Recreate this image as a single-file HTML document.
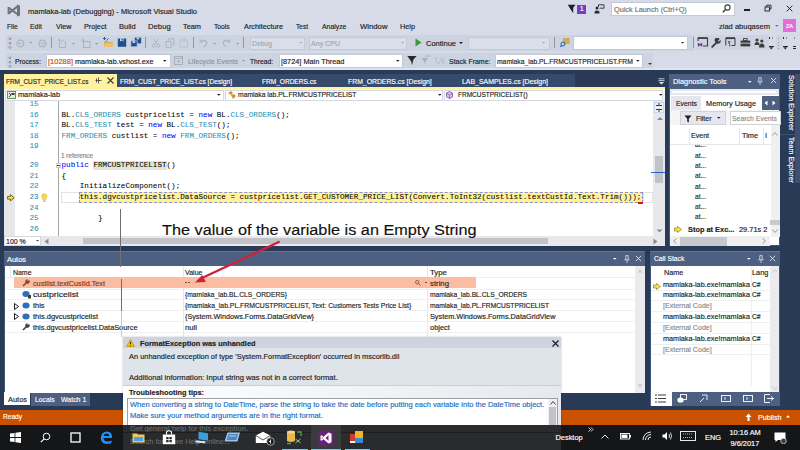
<!DOCTYPE html>
<html><head><meta charset="utf-8">
<style>
*{margin:0;padding:0;box-sizing:border-box}
html,body{width:800px;height:450px;overflow:hidden;background:#d6dbe7;font-family:"Liberation Sans",sans-serif;font-size:7px;color:#1e1e1e}
.a{position:absolute;display:block}
.t{position:absolute;white-space:nowrap;line-height:1;-webkit-text-stroke:0.16px currentColor}
</style></head><body>
<div class="a" style="left:0px;top:0px;width:800px;height:34px;background:#d6dbe7;"></div>
<svg class="a" style="left:6px;top:3px;" width="15" height="15" viewBox="0 0 15 15"><path d="M11 1.5 L14 2.6 V12.4 L11 13.5 Z" fill="#6e7480"/><path d="M2.8 4.8 L11.5 11.2 M2.8 10.4 L11.5 3.4" stroke="#6e7480" stroke-width="2"/><rect x="1.6" y="4" width="2" height="7.2" fill="#6e7480"/></svg>
<div class="t" style="left:28px;top:7.65px;font-size:7.5px;color:#1e1e1e;transform-origin:0 0;transform:scaleX(0.9994);">mamlaka-lab (Debugging) - Microsoft Visual Studio</div>
<svg class="a" style="left:567px;top:4px;" width="10" height="10" viewBox="0 0 10 10"><path d="M0.8 0.8 H8.5 L6.2 3.8 V9.2 L3.6 5.2 Z" fill="#1e1e1e"/></svg>
<div class="a" style="left:577px;top:5px;width:9px;height:8.5px;background:#7a3cc2;"></div>
<div class="t" style="left:579.5px;top:5.94px;font-size:6.8px;color:#ffffff;transform-origin:0 0;transform:scaleX(0.9524);">1</div>
<svg class="a" style="left:594px;top:4px;" width="11" height="10" viewBox="0 0 11 10"><circle cx="3" cy="4" r="1.5" fill="#2a2a2a"/><path d="M0.6 9.5 V7.6 Q3 5.6 5.4 7.6 V9.5 Z" fill="#2a2a2a"/><path d="M4.5 3 V0.8 H10 V4.2 H6.5 L5.5 5" fill="none" stroke="#2a2a2a" stroke-width="0.9"/></svg>
<div class="a" style="left:610.5px;top:2px;width:124.5px;height:13.5px;background:#ffffff;border:1px solid #c3c9d5;"></div>
<div class="t" style="left:614px;top:5.82px;font-size:7.3px;color:#717171;">Quick Launch (Ctrl+Q)</div>
<svg class="a" style="left:722px;top:4px;" width="9" height="9" viewBox="0 0 9 9"><circle cx="5.5" cy="3.5" r="2.6" fill="none" stroke="#3c3c3c" stroke-width="1.1"/><path d="M3.6 5.4 L0.8 8.2" stroke="#3c3c3c" stroke-width="1.4"/></svg>
<div class="a" style="left:744px;top:9px;width:6px;height:1.6px;background:#1e1e1e;"></div>
<svg class="a" style="left:764px;top:4px;" width="8" height="8" viewBox="0 0 8 8"><rect x="1" y="3" width="4.5" height="4" fill="none" stroke="#1e1e1e" stroke-width="0.9"/><path d="M2.6 3 V1.2 H7 V5 H5.5" fill="none" stroke="#1e1e1e" stroke-width="0.9"/></svg>
<svg class="a" style="left:786px;top:5px;" width="7" height="7" viewBox="0 0 7 7"><path d="M0.7 0.7 L6.3 6.3 M6.3 0.7 L0.7 6.3" stroke="#1e1e1e" stroke-width="0.95"/></svg>
<div class="t" style="left:6.8px;top:22.74px;font-size:7.4px;color:#1e1e1e;transform-origin:0 0;transform:scaleX(0.9069);">File</div>
<div class="t" style="left:30.2px;top:22.74px;font-size:7.4px;color:#1e1e1e;transform-origin:0 0;transform:scaleX(0.9266);">Edit</div>
<div class="t" style="left:55.6px;top:22.74px;font-size:7.4px;color:#1e1e1e;transform-origin:0 0;transform:scaleX(0.9694);">View</div>
<div class="t" style="left:83.5px;top:22.74px;font-size:7.4px;color:#1e1e1e;transform-origin:0 0;transform:scaleX(0.9782);">Project</div>
<div class="t" style="left:119.4px;top:22.74px;font-size:7.4px;color:#1e1e1e;transform-origin:0 0;transform:scaleX(1.0101);">Build</div>
<div class="t" style="left:148.3px;top:22.74px;font-size:7.4px;color:#1e1e1e;transform-origin:0 0;transform:scaleX(1.0423);">Debug</div>
<div class="t" style="left:183px;top:22.74px;font-size:7.4px;color:#1e1e1e;transform-origin:0 0;transform:scaleX(0.9961);">Team</div>
<div class="t" style="left:214.3px;top:22.74px;font-size:7.4px;color:#1e1e1e;transform-origin:0 0;transform:scaleX(0.9100);">Tools</div>
<div class="t" style="left:244px;top:22.74px;font-size:7.4px;color:#1e1e1e;transform-origin:0 0;transform:scaleX(0.9890);">Architecture</div>
<div class="t" style="left:296px;top:22.74px;font-size:7.4px;color:#1e1e1e;transform-origin:0 0;transform:scaleX(0.8854);">Test</div>
<div class="t" style="left:321.6px;top:22.74px;font-size:7.4px;color:#1e1e1e;transform-origin:0 0;transform:scaleX(0.9280);">Analyze</div>
<div class="t" style="left:359.5px;top:22.74px;font-size:7.4px;color:#1e1e1e;transform-origin:0 0;transform:scaleX(1.0462);">Window</div>
<div class="t" style="left:400px;top:22.74px;font-size:7.4px;color:#1e1e1e;transform-origin:0 0;transform:scaleX(0.9868);">Help</div>
<div class="t" style="left:719px;top:22.74px;font-size:7.4px;color:#1e1e1e;transform-origin:0 0;transform:scaleX(1.0175);">ziad abuqasem</div>
<svg class="a" style="left:775.2px;top:24.5px;" width="3.6" height="2.3" viewBox="0 0 3.6 2.3"><path d="M0 0 L3.6 0 L1.8 1.8 Z" fill="#717171"/></svg>
<div class="a" style="left:783px;top:19px;width:13px;height:13px;background:#e070d8;"></div>
<div class="t" style="left:786px;top:23.84px;font-size:5.5px;color:#ffffff;transform-origin:0 0;transform:scaleX(0.9960);">ZA</div>
<div class="a" style="left:6.3px;top:35px;width:688.7px;height:15.5px;background:#ccd3e1;"></div>
<div class="a" style="left:697px;top:35px;width:72px;height:15px;background:#ccd3e1;"></div>
<svg class="a" style="left:7.5px;top:37px;" width="4" height="13" viewBox="0 0 4 13"><path d="M2 0.6 L3.2 1.8 L2 3 L0.8 1.8 Z M2 5 L3.2 6.2 L2 7.4 L0.8 6.2 Z M2 9.2 L3.2 10.4 L2 11.6 L0.8 10.4 Z" fill="none" stroke="#75809a" stroke-width="0.75"/></svg>
<svg class="a" style="left:16px;top:38.5px;" width="9" height="9" viewBox="0 0 9 9"><circle cx="4.3" cy="4.5" r="3.3" fill="none" stroke="#b2b7c0" stroke-width="1.4"/><path d="M6 4.5 H2.8 M4.2 3 L2.7 4.5 L4.2 6" fill="none" stroke="#b2b7c0" stroke-width="0.9"/></svg>
<svg class="a" style="left:29.4px;top:42px;" width="3.2" height="2.1" viewBox="0 0 3.2 2.1"><path d="M0 0 L3.2 0 L1.6 1.6 Z" fill="#8f949e"/></svg>
<svg class="a" style="left:38px;top:38.5px;" width="9" height="9" viewBox="0 0 9 9"><circle cx="4.4" cy="4.5" r="3.3" fill="none" stroke="#b2b7c0" stroke-width="1.4"/><path d="M2.7 4.5 H5.9 M4.5 3 L6 4.5 L4.5 6" fill="none" stroke="#b2b7c0" stroke-width="0.9"/></svg>
<div class="a" style="left:51px;top:37px;width:1px;height:11px;background:#8f96a4;"></div>
<svg class="a" style="left:57px;top:38px;" width="10" height="10" viewBox="0 0 10 10"><path d="M2.5 4.5 V9.5 H8.5 V4.5 L5.5 2 Z" fill="none" stroke="#aab0ba" stroke-width="0.9"/><path d="M1 1 L3 3 M3 1 L1 3" stroke="#aab0ba" stroke-width="0.8"/></svg>
<svg class="a" style="left:72.4px;top:42.5px;" width="3.2" height="2.1" viewBox="0 0 3.2 2.1"><path d="M0 0 L3.2 0 L1.6 1.6 Z" fill="#8f949e"/></svg>
<svg class="a" style="left:81px;top:38px;" width="10" height="10" viewBox="0 0 10 10"><rect x="2.5" y="3.5" width="6.5" height="6" fill="none" stroke="#aab0ba" stroke-width="0.9"/><path d="M2 0.5 V4 M0.3 2.2 H3.8" stroke="#aab0ba" stroke-width="0.8"/></svg>
<svg class="a" style="left:95.4px;top:42.5px;" width="3.2" height="2.1" viewBox="0 0 3.2 2.1"><path d="M0 0 L3.2 0 L1.6 1.6 Z" fill="#8f949e"/></svg>
<svg class="a" style="left:102px;top:37px;" width="12" height="11" viewBox="0 0 12 11"><path d="M2 4 H5.5 L6.5 5 H11 V10 H2 Z" fill="#dcaa55"/><path d="M2.5 6.2 H11 V10 H2 Z" fill="#e8c27a"/><path d="M1 1.5 L4 1.5 M2.5 0 V3 M4.5 3.5 L6.5 1.5" stroke="#1f5fa8" stroke-width="1"/></svg>
<svg class="a" style="left:117px;top:37px;" width="10" height="11" viewBox="0 0 10 11"><path d="M0.8 1.5 H9.2 V9.8 H0.8 Z" fill="#1f4f8f"/><rect x="3" y="1.5" width="3.6" height="2.6" fill="#ccd3e1"/><rect x="4.6" y="2" width="1.2" height="1.6" fill="#1f4f8f"/></svg>
<svg class="a" style="left:130px;top:37px;" width="12" height="11" viewBox="0 0 12 11"><path d="M4.8 0.6 H11.2 V6.4 H4.8 Z" fill="#1f4f8f"/><rect x="6.6" y="0.6" width="2.6" height="1.8" fill="#ccd3e1"/><path d="M0.8 3.8 H7.2 V9.8 H0.8 Z" fill="#1f4f8f" stroke="#ccd3e1" stroke-width="0.7"/><rect x="2.6" y="4.2" width="2.6" height="1.8" fill="#ccd3e1"/></svg>
<div class="a" style="left:145px;top:37px;width:1px;height:11px;background:#8f96a4;"></div>
<svg class="a" style="left:151px;top:38px;" width="10" height="10" viewBox="0 0 10 10"><circle cx="2.6" cy="7.6" r="1.5" fill="none" stroke="#adb2bc" stroke-width="0.9"/><circle cx="7.4" cy="7.6" r="1.5" fill="none" stroke="#adb2bc" stroke-width="0.9"/><path d="M2.4 0.8 L6.4 6.4 M7.6 0.8 L3.6 6.4" stroke="#adb2bc" stroke-width="0.9"/></svg>
<svg class="a" style="left:165px;top:38px;" width="10" height="10" viewBox="0 0 10 10"><rect x="1" y="3.5" width="5" height="5.8" fill="none" stroke="#adb2bc" stroke-width="0.9"/><path d="M3.5 2.5 V0.8 H8.8 V6.8 H7" fill="none" stroke="#adb2bc" stroke-width="0.9"/></svg>
<svg class="a" style="left:179px;top:38px;" width="10" height="10" viewBox="0 0 10 10"><rect x="1" y="3" width="7.5" height="6.3" fill="none" stroke="#bcc1ca" stroke-width="0.9"/><path d="M3 3 V1.2 H6.5 V3" fill="none" stroke="#bcc1ca" stroke-width="0.9"/></svg>
<div class="a" style="left:193px;top:37px;width:1px;height:11px;background:#8f96a4;"></div>
<svg class="a" style="left:199px;top:38px;" width="10" height="10" viewBox="0 0 10 10"><path d="M1.2 1.2 V4 H4" fill="none" stroke="#adb2bc" stroke-width="1"/><path d="M1.5 3.8 Q4 1.5 6.5 2.8 Q8.8 4.5 7 7 L5 9.2" fill="none" stroke="#adb2bc" stroke-width="1.1"/></svg>
<svg class="a" style="left:213.4px;top:42.5px;" width="3.2" height="2.1" viewBox="0 0 3.2 2.1"><path d="M0 0 L3.2 0 L1.6 1.6 Z" fill="#8f949e"/></svg>
<svg class="a" style="left:221px;top:38px;" width="10" height="10" viewBox="0 0 10 10"><path d="M8.8 1.2 V4 H6" fill="none" stroke="#adb2bc" stroke-width="1"/><path d="M8.5 3.8 Q6 1.5 3.5 2.8 Q1.2 4.5 3 7 L5 9.2" fill="none" stroke="#adb2bc" stroke-width="1.1"/></svg>
<svg class="a" style="left:235.9px;top:42.5px;" width="3.2" height="2.1" viewBox="0 0 3.2 2.1"><path d="M0 0 L3.2 0 L1.6 1.6 Z" fill="#8f949e"/></svg>
<div class="a" style="left:243px;top:37px;width:1px;height:11px;background:#8f96a4;"></div>
<div class="a" style="left:249.5px;top:36.5px;width:55px;height:13px;background:#d9dee8;border:1px solid #c3c9d5;"></div>
<div class="t" style="left:252px;top:39.91px;font-size:7.2px;color:#a2a7b0;transform-origin:0 0;transform:scaleX(0.9443);">Debug</div>
<svg class="a" style="left:298.9px;top:42px;" width="3.2" height="2.1" viewBox="0 0 3.2 2.1"><path d="M0 0 L3.2 0 L1.6 1.6 Z" fill="#a2a7b0"/></svg>
<div class="a" style="left:309px;top:36.5px;width:98px;height:13px;background:#d9dee8;border:1px solid #c3c9d5;"></div>
<div class="t" style="left:311px;top:39.91px;font-size:7.2px;color:#a2a7b0;transform-origin:0 0;transform:scaleX(0.9811);">Any CPU</div>
<svg class="a" style="left:401.4px;top:42px;" width="3.2" height="2.1" viewBox="0 0 3.2 2.1"><path d="M0 0 L3.2 0 L1.6 1.6 Z" fill="#a2a7b0"/></svg>
<svg class="a" style="left:415px;top:38px;" width="7" height="9" viewBox="0 0 7 9"><path d="M0.5 0.5 L6.5 4.5 L0.5 8.5 Z" fill="#3a9a3a"/></svg>
<div class="t" style="left:426px;top:39.74px;font-size:7.4px;color:#1e1e1e;transform-origin:0 0;transform:scaleX(1.0141);">Continue</div>
<svg class="a" style="left:459px;top:41.5px;" width="4" height="2.5" viewBox="0 0 4 2.5"><path d="M0 0 L4 0 L2 2 Z" fill="#1e1e1e"/></svg>
<div class="a" style="left:467.5px;top:36.5px;width:82px;height:13px;background:#d9dee8;border:1px solid #c3c9d5;"></div>
<svg class="a" style="left:541.9px;top:42px;" width="3.2" height="2.1" viewBox="0 0 3.2 2.1"><path d="M0 0 L3.2 0 L1.6 1.6 Z" fill="#a2a7b0"/></svg>
<div class="a" style="left:554px;top:37px;width:1px;height:11px;background:#8f96a4;"></div>
<svg class="a" style="left:560px;top:37px;" width="10" height="11" viewBox="0 0 10 11"><rect x="3" y="1" width="6.5" height="6" fill="#d7a94e"/><circle cx="3" cy="7" r="2" fill="none" stroke="#1c64b0" stroke-width="1"/><path d="M1.6 8.4 L0.3 9.8" stroke="#1c64b0" stroke-width="1.2"/></svg>
<div class="a" style="left:572.5px;top:36px;width:115px;height:14px;background:#ffffff;border:1px solid #c3c9d5;"></div>
<svg class="a" style="left:681.4px;top:42px;" width="3.2" height="2.1" viewBox="0 0 3.2 2.1"><path d="M0 0 L3.2 0 L1.6 1.6 Z" fill="#1e1e1e"/></svg>
<div class="a" style="left:693px;top:37px;width:1px;height:11px;background:#8f96a4;"></div>
<svg class="a" style="left:697px;top:37px;" width="12" height="11" viewBox="0 0 12 11"><path d="M1 4 V1.2 H10.5 V9 H6" fill="none" stroke="#3c3c3c" stroke-width="1.1"/><path d="M1 1 H10.5" stroke="#3c3c3c" stroke-width="1.6"/><path d="M1.2 6.2 L3 7.6 L4.8 6.2 V9.2 L3 7.8 L1.2 9.2 Z" fill="#68217a" stroke="#68217a" stroke-width="0.6"/></svg>
<svg class="a" style="left:711px;top:38px;" width="10" height="10" viewBox="0 0 10 10"><path d="M1.2 8.8 L5.2 4.8" stroke="#3c3c3c" stroke-width="1.9" stroke-linecap="round"/><path d="M4.6 4.2 A2.6 2.6 0 1 1 8.6 1.2 L7 2.8 L7.2 3.4 L7.8 3.6 L9.4 2 A2.6 2.6 0 0 1 5.8 5.4 Z" fill="#3c3c3c"/></svg>
<svg class="a" style="left:725px;top:37px;" width="11" height="11" viewBox="0 0 11 11"><path d="M0.8 8.5 V1.2 H10 V8.5 H6.5" fill="none" stroke="#3c3c3c" stroke-width="1"/><path d="M0.8 1.2 H10" stroke="#3c3c3c" stroke-width="1.8"/><path d="M3.2 4.5 H4.8 L3.6 6.2 H5.2 M4.6 7.2 V9.5" fill="none" stroke="#3c3c3c" stroke-width="0.9"/></svg>
<svg class="a" style="left:740px;top:38px;" width="11" height="9" viewBox="0 0 11 9"><rect x="3.5" y="0.6" width="3.6" height="2" fill="none" stroke="#3c3c3c" stroke-width="0.9"/><rect x="0.6" y="2.6" width="9.6" height="5.8" fill="#3c3c3c"/><path d="M0.6 5.2 H10.2" stroke="#ccd3e1" stroke-width="0.9"/></svg>
<svg class="a" style="left:754px;top:38px;" width="11" height="10" viewBox="0 0 11 10"><circle cx="3" cy="2" r="1.6" fill="#3c3c3c"/><circle cx="7.8" cy="3" r="1.6" fill="#3c3c3c"/><path d="M0.5 7 Q0.5 4 3 4 Q5.5 4 5.5 7 Z M5 9.5 Q5 5.5 7.8 5.5 Q10.5 5.5 10.5 9.5 Z" fill="#3c3c3c"/></svg>
<div class="a" style="left:769px;top:37px;width:0.9px;height:2px;background:#2a2a2a;"></div>
<div class="a" style="left:772px;top:37px;width:0.9px;height:2px;background:#8a8f99;"></div>
<div class="a" style="left:769px;top:45.5px;width:4.5px;height:1px;background:#2a2a2a;"></div>
<svg class="a" style="left:769px;top:46.5px;" width="5" height="3" viewBox="0 0 5 3"><path d="M0.3 0.3 H4.2 L2.25 2.6 Z" fill="#2a2a2a"/></svg>
<div class="a" style="left:775.5px;top:35px;width:7px;height:15px;background:#cfd5e2;"></div>
<div class="a" style="left:777.8px;top:38px;width:1px;height:1px;background:#8b93a3;"></div>
<div class="a" style="left:777.8px;top:41.5px;width:1px;height:1px;background:#8b93a3;"></div>
<div class="a" style="left:777.8px;top:45px;width:1px;height:1px;background:#8b93a3;"></div>
<div class="a" style="left:777.8px;top:48px;width:1px;height:1px;background:#8b93a3;"></div>
<div class="a" style="left:783px;top:37px;width:0.9px;height:2px;background:#2a2a2a;"></div>
<div class="a" style="left:786px;top:37px;width:0.9px;height:2px;background:#8a8f99;"></div>
<div class="a" style="left:783px;top:45.5px;width:4.5px;height:1px;background:#2a2a2a;"></div>
<svg class="a" style="left:783px;top:46.5px;" width="5" height="3" viewBox="0 0 5 3"><path d="M0.3 0.3 H4.2 L2.25 2.6 Z" fill="#2a2a2a"/></svg>
<div class="a" style="left:794.3px;top:37px;width:0.9px;height:2px;background:#8a8f99;"></div>
<div class="a" style="left:793px;top:46px;width:2.5px;height:1.2px;background:#2a2a2a;"></div>
<div class="a" style="left:793px;top:48px;width:2.5px;height:1.2px;background:#2a2a2a;"></div>
<div class="a" style="left:6.3px;top:53px;width:646.7px;height:15.7px;background:#ccd3e1;"></div>
<svg class="a" style="left:7.5px;top:55.5px;" width="4" height="13" viewBox="0 0 4 13"><path d="M2 0.6 L3.2 1.8 L2 3 L0.8 1.8 Z M2 5 L3.2 6.2 L2 7.4 L0.8 6.2 Z M2 9.2 L3.2 10.4 L2 11.6 L0.8 10.4 Z" fill="none" stroke="#75809a" stroke-width="0.75"/></svg>
<div class="t" style="left:15px;top:58.04px;font-size:7.4px;color:#1e1e1e;transform-origin:0 0;transform:scaleX(0.9043);">Process:</div>
<div class="a" style="left:45.5px;top:54px;width:125px;height:14px;background:#ffffff;border:1px solid #c3c9d5;"></div>
<div class="t" style="left:48px;top:58.04px;font-size:7.4px;color:#ca5100;transform-origin:0 0;transform:scaleX(1.0139);">[10288]</div>
<div class="t" style="left:75px;top:58.04px;font-size:7.4px;color:#1e1e1e;transform-origin:0 0;transform:scaleX(0.9851);">mamlaka-lab.vshost.exe</div>
<svg class="a" style="left:163.2px;top:59.5px;" width="3.6" height="2.3" viewBox="0 0 3.6 2.3"><path d="M0 0 L3.6 0 L1.8 1.8 Z" fill="#1e1e1e"/></svg>
<svg class="a" style="left:174px;top:55px;" width="10" height="11" viewBox="0 0 10 11"><rect x="0.5" y="1.5" width="8" height="8" fill="none" stroke="#aab0ba"/><path d="M0.5 3.5 H8.5 M4.5 5 V8 M3 6.5 H6" stroke="#aab0ba" stroke-width="0.9"/></svg>
<div class="t" style="left:187.5px;top:58.04px;font-size:7.4px;color:#8e94a0;transform-origin:0 0;transform:scaleX(0.9363);">Lifecycle Events</div>
<svg class="a" style="left:242.4px;top:59.5px;" width="3.2" height="2.1" viewBox="0 0 3.2 2.1"><path d="M0 0 L3.2 0 L1.6 1.6 Z" fill="#8e94a0"/></svg>
<div class="t" style="left:250px;top:58.04px;font-size:7.4px;color:#1e1e1e;transform-origin:0 0;transform:scaleX(0.9030);">Thread:</div>
<div class="a" style="left:278.5px;top:54px;width:124px;height:14px;background:#ffffff;border:1px solid #c3c9d5;"></div>
<div class="t" style="left:281px;top:58.04px;font-size:7.4px;color:#1e1e1e;transform-origin:0 0;transform:scaleX(0.9908);">[8724] Main Thread</div>
<svg class="a" style="left:396.2px;top:59.5px;" width="3.6" height="2.3" viewBox="0 0 3.6 2.3"><path d="M0 0 L3.6 0 L1.8 1.8 Z" fill="#1e1e1e"/></svg>
<svg class="a" style="left:407px;top:55px;" width="10" height="11" viewBox="0 0 10 11"><path d="M0.3 1 H9.6 L6.5 4.5 L5 10.2 L4.2 6.5 Z" fill="#2a2a2a"/></svg>
<svg class="a" style="left:421px;top:55px;" width="10" height="11" viewBox="0 0 10 11"><path d="M0.5 3 H7 L5 5.5 L4 9.5 L3.3 6.5 Z" fill="#aab0ba"/><path d="M4 1 H9.5" stroke="#aab0ba" stroke-width="0.9"/></svg>
<svg class="a" style="left:434px;top:56px;" width="12" height="9" viewBox="0 0 12 9"><path d="M1 1.5 L3.5 7.5 M3 1.5 L1 4 M8.5 1 L4.5 8 M7 3 L11 7.5 M11 1.5 L8 8" stroke="#b4b9c2" stroke-width="0.9"/></svg>
<div class="t" style="left:448.5px;top:58.04px;font-size:7.4px;color:#1e1e1e;transform-origin:0 0;transform:scaleX(0.9444);">Stack Frame:</div>
<div class="a" style="left:494.5px;top:54px;width:148px;height:14px;background:#ffffff;border:1px solid #c3c9d5;"></div>
<div class="a" style="left:497px;top:54px;width:136px;height:13px;overflow:hidden">
<div class="t" style="left:0px;top:4.04px;font-size:7.4px;color:#1e1e1e;transform-origin:0 0;transform:scaleX(0.9132);">mamlaka_lab.PL.FRMCUSTPRICELIST.FRMCUSTPRICELIST()</div>
</div>
<svg class="a" style="left:636.2px;top:59.5px;" width="3.6" height="2.3" viewBox="0 0 3.6 2.3"><path d="M0 0 L3.6 0 L1.8 1.8 Z" fill="#1e1e1e"/></svg>
<svg class="a" style="left:648px;top:63px;" width="4" height="2.5" viewBox="0 0 4 2.5"><path d="M0 0 L4 0 L2 2 Z" fill="#3c3c3c"/></svg>
<div class="a" style="left:0px;top:68px;width:800px;height:1.5px;background:#dde2ec;"></div>
<div class="a" style="left:0px;top:69.5px;width:800px;height:355.5px;background:#293a56;"></div>
<div class="a" style="left:117px;top:74px;width:458px;height:13px;background:#364a6b;"></div>
<div class="a" style="left:4px;top:74px;width:113px;height:13px;background:#fff1a0;"></div>
<div class="t" style="left:6.2px;top:77.74px;font-size:7.4px;color:#1e1e1e;transform-origin:0 0;transform:scaleX(0.8659);">FRM_CUST_PRICE_LIST.cs</div>
<svg class="a" style="left:95px;top:77px;" width="7" height="7" viewBox="0 0 7 7"><path d="M0.5 3.5 H6.5 M3.5 0.5 V6.5 M1.5 1.5 V5.5" stroke="#3c3c3c" stroke-width="0.8" fill="none"/></svg>
<svg class="a" style="left:106.5px;top:77px;" width="7" height="7" viewBox="0 0 7 7"><path d="M0.5 0.5 L6.5 6.5 M6.5 0.5 L0.5 6.5" stroke="#3c3c3c" stroke-width="1.1"/></svg>
<div class="t" style="left:119.5px;top:77.74px;font-size:7.4px;color:#ffffff;transform-origin:0 0;transform:scaleX(0.9000);">FRM_CUST_PRICE_LIST.cs [Design]</div>
<div class="t" style="left:262px;top:77.74px;font-size:7.4px;color:#ffffff;transform-origin:0 0;transform:scaleX(0.8859);">FRM_ORDERS.cs</div>
<div class="t" style="left:347.5px;top:77.74px;font-size:7.4px;color:#ffffff;transform-origin:0 0;transform:scaleX(0.9264);">FRM_ORDERS.cs [Design]</div>
<div class="t" style="left:462px;top:77.74px;font-size:7.4px;color:#ffffff;transform-origin:0 0;transform:scaleX(0.9388);">LAB_SAMPLES.cs [Design]</div>
<svg class="a" style="left:657.5px;top:77.5px;" width="7" height="7" viewBox="0 0 7 7"><path d="M0.5 0.8 H6.5 M0.5 2.6 H6.5" stroke="#d8dce6" stroke-width="0.9"/><path d="M0.8 4 H6.2 L3.5 6.5 Z" fill="#d8dce6"/></svg>
<div class="a" style="left:4px;top:87px;width:661px;height:1.6px;background:#fff1a0;"></div>
<div class="a" style="left:4px;top:89px;width:661px;height:12px;background:#f5f5f5;"></div>
<div class="a" style="left:5px;top:89.5px;width:219px;height:11.5px;background:#ffffff;border:1px solid #d5d8de;"></div>
<svg class="a" style="left:7px;top:90.5px;" width="9" height="8" viewBox="0 0 9 8"><rect x="0.5" y="0.5" width="8" height="7" fill="#dfeedb" stroke="#5b9a51"/><path d="M2 2 L4 4 L2 6" stroke="#3c3c3c" fill="none"/><rect x="4.5" y="2" width="3" height="2" fill="#3c3c3c"/></svg>
<div class="t" style="left:18px;top:91.24px;font-size:7.4px;color:#1e1e1e;transform-origin:0 0;transform:scaleX(0.9928);">mamlaka-lab</div>
<svg class="a" style="left:217.2px;top:94px;" width="3.6" height="2.3" viewBox="0 0 3.6 2.3"><path d="M0 0 L3.6 0 L1.8 1.8 Z" fill="#1e1e1e"/></svg>
<div class="a" style="left:225px;top:89.5px;width:217.5px;height:11.5px;background:#ffffff;border:1px solid #d5d8de;"></div>
<svg class="a" style="left:227px;top:90px;" width="10" height="10" viewBox="0 0 10 10"><path d="M1 3 L4 1 L6 3 L4 5 Z M4 5 L7 4 L9 6 L6 9 Z" fill="#d8922f"/></svg>
<div class="t" style="left:238px;top:91.24px;font-size:7.4px;color:#1e1e1e;transform-origin:0 0;transform:scaleX(0.9160);">mamlaka lab.PL.FRMCUSTPRICELIST</div>
<svg class="a" style="left:437.7px;top:94px;" width="3.6" height="2.3" viewBox="0 0 3.6 2.3"><path d="M0 0 L3.6 0 L1.8 1.8 Z" fill="#1e1e1e"/></svg>
<div class="a" style="left:444px;top:89.5px;width:219px;height:11.5px;background:#ffffff;border:1px solid #d5d8de;"></div>
<svg class="a" style="left:446px;top:91px;" width="7" height="8" viewBox="0 0 7 8"><path d="M3.5 0.5 L6.5 2.2 V5.8 L3.5 7.5 L0.5 5.8 V2.2 Z" fill="#d9c9ec" stroke="#6c3f9a" stroke-width="0.8"/><path d="M0.5 2.2 L3.5 4 L6.5 2.2 M3.5 4 V7.5" fill="none" stroke="#6c3f9a" stroke-width="0.6"/></svg>
<div class="t" style="left:458px;top:91.24px;font-size:7.4px;color:#1e1e1e;transform-origin:0 0;transform:scaleX(0.8783);">FRMCUSTPRICELIST()</div>
<svg class="a" style="left:658.7px;top:94px;" width="3.6" height="2.3" viewBox="0 0 3.6 2.3"><path d="M0 0 L3.6 0 L1.8 1.8 Z" fill="#1e1e1e"/></svg>
<div class="a" style="left:4px;top:101px;width:661px;height:135px;background:#ffffff;"></div>
<div class="a" style="left:4px;top:101px;width:11px;height:135px;background:#e6e7e8;"></div>
<div class="a" style="left:58px;top:101px;width:1px;height:135px;background:#a5a5a5;"></div>
<div class="t" style="left:18.5px;top:101.17px;font-family:'Liberation Mono',monospace;font-size:7.6px;color:#2b91af;width:20px;text-align:right;-webkit-text-stroke:0.05px currentColor">15</div>
<div class="t" style="left:18.5px;top:111.67px;font-family:'Liberation Mono',monospace;font-size:7.6px;color:#2b91af;width:20px;text-align:right;-webkit-text-stroke:0.05px currentColor">16</div>
<div class="t" style="left:18.5px;top:122.17px;font-family:'Liberation Mono',monospace;font-size:7.6px;color:#2b91af;width:20px;text-align:right;-webkit-text-stroke:0.05px currentColor">17</div>
<div class="t" style="left:18.5px;top:132.77px;font-family:'Liberation Mono',monospace;font-size:7.6px;color:#2b91af;width:20px;text-align:right;-webkit-text-stroke:0.05px currentColor">18</div>
<div class="t" style="left:18.5px;top:143.37px;font-family:'Liberation Mono',monospace;font-size:7.6px;color:#2b91af;width:20px;text-align:right;-webkit-text-stroke:0.05px currentColor">19</div>
<div class="t" style="left:18.5px;top:162.17px;font-family:'Liberation Mono',monospace;font-size:7.6px;color:#2b91af;width:20px;text-align:right;-webkit-text-stroke:0.05px currentColor">20</div>
<div class="t" style="left:18.5px;top:172.77px;font-family:'Liberation Mono',monospace;font-size:7.6px;color:#2b91af;width:20px;text-align:right;-webkit-text-stroke:0.05px currentColor">21</div>
<div class="t" style="left:18.5px;top:183.37px;font-family:'Liberation Mono',monospace;font-size:7.6px;color:#2b91af;width:20px;text-align:right;-webkit-text-stroke:0.05px currentColor">22</div>
<div class="t" style="left:18.5px;top:193.97px;font-family:'Liberation Mono',monospace;font-size:7.6px;color:#2b91af;width:20px;text-align:right;-webkit-text-stroke:0.05px currentColor">23</div>
<div class="t" style="left:18.5px;top:204.57px;font-family:'Liberation Mono',monospace;font-size:7.6px;color:#2b91af;width:20px;text-align:right;-webkit-text-stroke:0.05px currentColor">24</div>
<div class="t" style="left:18.5px;top:215.17px;font-family:'Liberation Mono',monospace;font-size:7.6px;color:#2b91af;width:20px;text-align:right;-webkit-text-stroke:0.05px currentColor">25</div>
<div class="t" style="left:18.5px;top:225.77px;font-family:'Liberation Mono',monospace;font-size:7.6px;color:#2b91af;width:20px;text-align:right;-webkit-text-stroke:0.05px currentColor">26</div>
<div class="t" style="left:61.50px;top:111.67px;font-family:'Liberation Mono',monospace;font-size:7.617px;-webkit-text-stroke:0.05px currentColor"><span style="color:#000000">BL.</span><span style="color:#2b91af">CLS_ORDERS</span><span style="color:#000000"> custpricelist = </span><span style="color:#0000ff">new</span><span style="color:#000000"> BL.</span><span style="color:#2b91af">CLS_ORDERS</span><span style="color:#000000">();</span></div>
<div class="t" style="left:61.50px;top:122.17px;font-family:'Liberation Mono',monospace;font-size:7.617px;-webkit-text-stroke:0.05px currentColor"><span style="color:#000000">BL.</span><span style="color:#2b91af">CLS_TEST</span><span style="color:#000000"> test = </span><span style="color:#0000ff">new</span><span style="color:#000000"> BL.</span><span style="color:#2b91af">CLS_TEST</span><span style="color:#000000">();</span></div>
<div class="t" style="left:61.50px;top:132.77px;font-family:'Liberation Mono',monospace;font-size:7.617px;-webkit-text-stroke:0.05px currentColor"><span style="color:#2b91af">FRM_ORDERS</span><span style="color:#000000"> custlist = </span><span style="color:#0000ff">new</span><span style="color:#000000"> </span><span style="color:#2b91af">FRM_ORDERS</span><span style="color:#000000">();</span></div>
<div class="t" style="left:61px;top:153.24px;font-size:6.8px;color:#858585;transform-origin:0 0;transform:scaleX(0.9307);">1 reference</div>
<div class="a" style="left:92.5px;top:161px;width:74px;height:9px;background:#e1e4d6;"></div>
<div class="t" style="left:61.50px;top:162.17px;font-family:'Liberation Mono',monospace;font-size:7.617px;-webkit-text-stroke:0.05px currentColor"><span style="color:#0000ff">public</span><span style="color:#000000"> FRMCUSTPRICELIST()</span></div>
<div class="a" style="left:56.2px;top:162.8px;width:4.6px;height:5px;background:#ffffff;border:1px solid #c8c8c8;"></div>
<div class="a" style="left:57.2px;top:164.8px;width:2.8px;height:1px;background:#3c3c3c;"></div>
<div class="t" style="left:61.50px;top:172.77px;font-family:'Liberation Mono',monospace;font-size:7.617px;-webkit-text-stroke:0.05px currentColor"><span style="color:#000000">{</span></div>
<div class="t" style="left:79.78px;top:183.37px;font-family:'Liberation Mono',monospace;font-size:7.617px;-webkit-text-stroke:0.05px currentColor"><span style="color:#000000">InitializeComponent();</span></div>
<div class="a" style="left:61px;top:192px;width:18.5px;height:10.5px;background:#ffffff;border:1px solid #e3e3e3;"></div>
<div class="a" style="left:642.5px;top:192px;width:10px;height:10.5px;background:#ffffff;border:1px solid #e3e3e3;"></div>
<div class="a" style="left:79px;top:192px;width:564px;height:10.5px;background:#fff29d;border:1px dashed #8a8fd8"></div>
<div class="t" style="left:79.78px;top:193.97px;font-family:'Liberation Mono',monospace;font-size:7.617px;-webkit-text-stroke:0.05px currentColor"><span style="color:#000000">this.dgvcustpricelist.DataSource = custpricelist.GET_CUSTOMER_PRICE_LIST(Convert.ToInt32(custlist.textCustId.Text.Trim()));</span></div>
<div class="a" style="left:638px;top:202px;width:5px;height:1.5px;background:#e51400;"></div>
<div class="t" style="left:98.06px;top:215.17px;font-family:'Liberation Mono',monospace;font-size:7.617px;-webkit-text-stroke:0.05px currentColor"><span style="color:#000000">}</span></div>
<svg class="a" style="left:6.5px;top:193.5px;" width="8" height="8" viewBox="0 0 8 8"><path d="M0.6 2.4 H3.4 V0.6 L7.2 3.8 L3.4 7 V5.2 H0.6 Z" fill="#ffdc3a" stroke="#5a4a10" stroke-width="0.8"/></svg>
<svg class="a" style="left:40.5px;top:192.5px;" width="7" height="10" viewBox="0 0 7 10"><path d="M3.3 0.3 A3.1 3.1 0 0 1 5.2 5.8 V7 H1.4 V5.8 A3.1 3.1 0 0 1 3.3 0.3 Z" fill="#f5cf45"/><path d="M2.3 3.5 L3.3 4.5 L4.3 3.5 M3.3 4.5 V6.5" fill="none" stroke="#fff3b8" stroke-width="0.6"/><rect x="2" y="7.3" width="2.6" height="1.6" fill="#b8b8b8"/></svg>
<div class="a" style="left:653px;top:101px;width:12px;height:135px;background:#e8e8ec;"></div>
<div class="a" style="left:654px;top:102px;width:10px;height:11px;background:#e8f0f8;border:1px solid #c5d8ec;"></div>
<svg class="a" style="left:655px;top:103px;" width="8" height="9" viewBox="0 0 8 9"><path d="M1 2.5 H7 M1 6.5 H7" stroke="#3c3c3c"/><path d="M4 0 L4 3 M4 6 V9" stroke="#3c3c3c"/></svg>
<svg class="a" style="left:656.5px;top:117px;" width="6" height="3.5" viewBox="0 0 6 3.5"><path d="M0 3 L3 0 L6 3 Z" fill="#868999"/></svg>
<div class="a" style="left:655px;top:156px;width:8px;height:27px;background:#c2c3c9;"></div>
<div class="a" style="left:651px;top:172px;width:14px;height:1.2px;background:#2d5fd0;"></div>
<svg class="a" style="left:655.5px;top:229px;" width="7" height="4" viewBox="0 0 7 4"><path d="M0.5 0.5 H6.5 L3.5 3.5 Z" fill="#868999"/></svg>
<div class="a" style="left:4px;top:236px;width:661px;height:10px;background:#e8e8ec;"></div>
<div class="a" style="left:4px;top:236px;width:37px;height:10px;background:#ffffff;border:1px solid #d5d8de;"></div>
<div class="t" style="left:6px;top:238.07px;font-size:7px;color:#1e1e1e;">100 %</div>
<svg class="a" style="left:35.5px;top:240px;" width="3.0" height="2.0" viewBox="0 0 3.0 2.0"><path d="M0 0 L3.0 0 L1.5 1.5 Z" fill="#3c3c3c"/></svg>
<svg class="a" style="left:44px;top:238px;" width="5" height="7" viewBox="0 0 5 7"><path d="M4.5 0.5 V6.5 L0.5 3.5 Z" fill="#868999"/></svg>
<div class="a" style="left:83px;top:238px;width:465px;height:6px;background:#c2c3c9;"></div>
<svg class="a" style="left:653px;top:238px;" width="5" height="7" viewBox="0 0 5 7"><path d="M0.5 0.5 V6.5 L4.5 3.5 Z" fill="#868999"/></svg>
<div class="a" style="left:669px;top:74px;width:111px;height:172px;background:#ffffff;border:1px solid #42567a"></div>
<div class="a" style="left:669px;top:74px;width:111px;height:15px;background:#4d6082;"></div>
<div class="t" style="left:672.7px;top:78.44px;font-size:7.4px;color:#ffffff;transform-origin:0 0;transform:scaleX(0.9961);">Diagnostic Tools</div>
<svg class="a" style="left:748.2px;top:81px;" width="3.6" height="2.3" viewBox="0 0 3.6 2.3"><path d="M0 0 L3.6 0 L1.8 1.8 Z" fill="#ffffff"/></svg>
<svg class="a" style="left:757px;top:77px;" width="6" height="8" viewBox="0 0 6 8"><path d="M1.8 0.6 V4.6 M4.2 0.6 V4.6 M1.8 0.6 H4.2 M0.3 4.8 H5.7 M3 4.8 V8" fill="none" stroke="#e8ecf4" stroke-width="0.75"/></svg>
<svg class="a" style="left:770px;top:77px;" width="7" height="7" viewBox="0 0 7 7"><path d="M0.8 0.8 L6.2 6.2 M6.2 0.8 L0.8 6.2" stroke="#e8ecf4" stroke-width="0.85"/></svg>
<div class="a" style="left:670px;top:89px;width:109px;height:6px;background:#e6e7ee;"></div>
<div class="a" style="left:672px;top:91px;width:104px;height:2px;background:#ffffff;"></div>
<div class="a" style="left:670px;top:95px;width:109px;height:15px;background:#ffffff;"></div>
<div class="a" style="left:671px;top:96px;width:30px;height:14px;background:#e6e7ee;"></div>
<div class="t" style="left:676.2px;top:99.74px;font-size:7.4px;color:#1e1e1e;transform-origin:0 0;transform:scaleX(0.9294);">Events</div>
<div class="t" style="left:705.5px;top:99.74px;font-size:7.4px;color:#1e1e1e;transform-origin:0 0;transform:scaleX(0.9979);">Memory Usage</div>
<div class="a" style="left:762px;top:96px;width:17px;height:14px;background:#4d6082;"></div>
<svg class="a" style="left:764px;top:100px;" width="12" height="6" viewBox="0 0 12 6"><path d="M3.5 0.5 V5.5 L0.5 3 Z M8.5 0.5 V5.5 L11.5 3 Z" fill="#ffffff"/></svg>
<div class="a" style="left:670px;top:110px;width:109px;height:15px;background:#f5f5f5;"></div>
<div class="a" style="left:679.7px;top:111px;width:46px;height:14px;background:#e6e7ee;border:1px solid #cfd3da;"></div>
<svg class="a" style="left:684px;top:115px;" width="8" height="8" viewBox="0 0 8 8"><path d="M0.5 0.5 H7.5 L4.8 3.8 V7.5 L3.2 6.5 V3.8 Z" fill="#1e1e1e"/></svg>
<div class="t" style="left:695.7px;top:114.74px;font-size:7.4px;color:#1e1e1e;transform-origin:0 0;transform:scaleX(0.9438);">Filter</div>
<svg class="a" style="left:717.2px;top:117px;" width="3.6" height="2.3" viewBox="0 0 3.6 2.3"><path d="M0 0 L3.6 0 L1.8 1.8 Z" fill="#1e1e1e"/></svg>
<div class="a" style="left:729.5px;top:111px;width:51px;height:14px;background:#ffffff;border:1px solid #cfd3da;"></div>
<div class="t" style="left:732px;top:114.74px;font-size:7.4px;color:#8a8a8a;transform-origin:0 0;transform:scaleX(0.9362);">Search Events</div>
<div class="a" style="left:670px;top:125px;width:109px;height:19px;background:#ffffff;"></div>
<div class="a" style="left:670px;top:143.5px;width:101px;height:1px;background:#e6e7ee;"></div>
<div class="a" style="left:688.5px;top:128px;width:1px;height:15.5px;background:#e6e7ee;"></div>
<div class="a" style="left:738.5px;top:128px;width:1px;height:15.5px;background:#e6e7ee;"></div>
<div class="a" style="left:763px;top:128px;width:1px;height:15.5px;background:#e6e7ee;"></div>
<div class="t" style="left:690.5px;top:132.44px;font-size:7.4px;color:#1e1e1e;transform-origin:0 0;transform:scaleX(0.9524);">Event</div>
<div class="t" style="left:742px;top:132.44px;font-size:7.4px;color:#1e1e1e;transform-origin:0 0;transform:scaleX(0.9908);">Time</div>
<div class="t" style="left:765px;top:132.44px;font-size:7.4px;color:#1e1e1e;">I</div>
<div class="a" style="left:770.5px;top:125px;width:9px;height:112px;background:#f0f0f0;"></div>
<svg class="a" style="left:771.5px;top:132px;" width="6" height="4" viewBox="0 0 6 4"><path d="M0.5 3.5 L3 0.5 L5.5 3.5" fill="none" stroke="#9a9a9a"/></svg>
<div class="a" style="left:769.5px;top:220.2px;width:10.5px;height:4.5px;background:#c8c9ce;"></div>
<svg class="a" style="left:771.5px;top:229px;" width="6" height="4" viewBox="0 0 6 4"><path d="M0.5 0.5 L3 3.5 L5.5 0.5" fill="none" stroke="#9a9a9a"/></svg>
<div class="a" style="left:670px;top:144.5px;width:100px;height:80px;overflow:hidden">
<div class="t" style="left:25px;top:-3.26px;font-size:7.4px;color:#1e1e1e;transform-origin:0 0;transform:scaleX(0.8926);">at...</div>
<div class="t" style="left:25px;top:7.24px;font-size:7.4px;color:#1e1e1e;transform-origin:0 0;transform:scaleX(0.8926);">at...</div>
<div class="t" style="left:25px;top:17.44px;font-size:7.4px;color:#1e1e1e;transform-origin:0 0;transform:scaleX(0.8926);">at...</div>
<div class="t" style="left:25px;top:27.84px;font-size:7.4px;color:#1e1e1e;transform-origin:0 0;transform:scaleX(0.8926);">at...</div>
<div class="t" style="left:25px;top:38.04px;font-size:7.4px;color:#1e1e1e;transform-origin:0 0;transform:scaleX(0.8926);">at...</div>
<div class="t" style="left:25px;top:48.44px;font-size:7.4px;color:#1e1e1e;transform-origin:0 0;transform:scaleX(0.8926);">at...</div>
<div class="t" style="left:25px;top:58.44px;font-size:7.4px;color:#1e1e1e;transform-origin:0 0;transform:scaleX(0.8926);">at...</div>
<div class="t" style="left:25px;top:68.84px;font-size:7.4px;color:#1e1e1e;transform-origin:0 0;transform:scaleX(0.8926);">at...</div>
</div>
<svg class="a" style="left:674px;top:226px;" width="8" height="7" viewBox="0 0 8 7"><path d="M0.5 2 H3.5 V0.5 L7.5 3.5 L3.5 6.5 V5 H0.5 Z" fill="#ffe24b" stroke="#8a7a20" stroke-width="0.7"/></svg>
<div class="t" style="left:688px;top:226.24px;font-size:7.4px;color:#1e1e1e;font-weight:bold;">Stop at Exc...</div>
<div class="t" style="left:739px;top:226.24px;font-size:7.4px;color:#1e1e1e;">29.71s 2</div>
<div class="a" style="left:670px;top:236px;width:100px;height:9.5px;background:#f0f0f0;"></div>
<div class="a" style="left:680px;top:236.5px;width:46.5px;height:9px;background:#c8c9ce;"></div>
<svg class="a" style="left:673px;top:238px;" width="4" height="6" viewBox="0 0 4 6"><path d="M3.5 0.5 L0.5 3 L3.5 5.5" fill="none" stroke="#9a9a9a"/></svg>
<svg class="a" style="left:762px;top:238px;" width="4" height="6" viewBox="0 0 4 6"><path d="M0.5 0.5 L3.5 3 L0.5 5.5" fill="none" stroke="#9a9a9a"/></svg>
<div class="a" style="left:795px;top:74px;width:5px;height:109px;background:#3e5072;"></div>
<div class="a" style="left:780px;top:134px;width:15px;height:1px;background:#3e5072;"></div>
<div class="a" style="left:795px;top:74.6px;transform-origin:0 0;transform:rotate(90deg)">
<div class="t" style="left:0px;top:-0.19px;font-size:7.2px;color:#ffffff;transform-origin:0 0;transform:scaleX(1.0122);">Solution Explorer</div>
</div>
<div class="a" style="left:795px;top:137.3px;transform-origin:0 0;transform:rotate(90deg)">
<div class="t" style="left:0px;top:-0.19px;font-size:7.2px;color:#ffffff;transform-origin:0 0;transform:scaleX(0.9928);">Team Explorer</div>
</div>
<div class="a" style="left:4px;top:251px;width:641px;height:141.5px;background:#ffffff;border:1px solid #42567a;border-bottom:0"></div>
<div class="a" style="left:4px;top:251px;width:641px;height:15px;background:#4d6082;border-top:1px solid #62769a"></div>
<div class="t" style="left:7px;top:255.54px;font-size:7.4px;color:#ffffff;transform-origin:0 0;transform:scaleX(1.0054);">Autos</div>
<svg class="a" style="left:613.2px;top:258px;" width="3.6" height="2.3" viewBox="0 0 3.6 2.3"><path d="M0 0 L3.6 0 L1.8 1.8 Z" fill="#ffffff"/></svg>
<svg class="a" style="left:624px;top:255px;" width="6" height="8" viewBox="0 0 6 8"><path d="M1.8 0.6 V4.6 M4.2 0.6 V4.6 M1.8 0.6 H4.2 M0.3 4.8 H5.7 M3 4.8 V8" fill="none" stroke="#e8ecf4" stroke-width="0.75"/></svg>
<svg class="a" style="left:635px;top:255px;" width="7" height="7" viewBox="0 0 7 7"><path d="M0.8 0.8 L6.2 6.2 M6.2 0.8 L0.8 6.2" stroke="#e8ecf4" stroke-width="0.85"/></svg>
<div class="a" style="left:5px;top:276.5px;width:630px;height:1px;background:#eeeeee;"></div>
<div class="a" style="left:10px;top:266px;width:1px;height:11px;background:#e6e6e6;"></div>
<div class="a" style="left:182.5px;top:266px;width:1px;height:120px;background:#e6e6e6;"></div>
<div class="a" style="left:427px;top:266px;width:1px;height:120px;background:#e6e6e6;"></div>
<div class="t" style="left:12.5px;top:268.94px;font-size:7.4px;color:#1e1e1e;transform-origin:0 0;transform:scaleX(0.9384);">Name</div>
<div class="t" style="left:185px;top:268.94px;font-size:7.4px;color:#1e1e1e;transform-origin:0 0;transform:scaleX(0.9535);">Value</div>
<div class="t" style="left:429.6px;top:268.94px;font-size:7.4px;color:#1e1e1e;transform-origin:0 0;transform:scaleX(1.0485);">Type</div>
<div class="a" style="left:635px;top:266px;width:10px;height:126.5px;background:#ebebef;"></div>
<svg class="a" style="left:637px;top:384px;" width="6" height="4" viewBox="0 0 6 4"><path d="M0.5 0.5 L3 3.5 L5.5 0.5 Z" fill="#c9c9c9"/></svg>
<svg class="a" style="left:636.5px;top:269px;" width="6" height="4" viewBox="0 0 6 4"><path d="M0.5 3.5 L3 0.5 L5.5 3.5 Z" fill="#c9c9c9"/></svg>
<div class="a" style="left:14px;top:277px;width:462px;height:11px;background:#fcbca2;"></div>
<svg class="a" style="left:22px;top:279px;" width="8" height="8" viewBox="0 0 8 8"><path d="M1 7 L4.5 3.5" stroke="#7a4a30" stroke-width="1.6"/><circle cx="5.5" cy="2.5" r="2.2" fill="#7a4a30"/><path d="M5.5 1.5 L7.5 -0.5" stroke="#fcbca2" stroke-width="1.3"/></svg>
<div class="t" style="left:32.5px;top:279.74px;font-size:7.4px;color:#7e3a22;transform-origin:0 0;transform:scaleX(0.9793);">custlist.textCustId.Text</div>
<div class="a" style="left:185px;top:282px;width:1.9px;height:1.1px;background:#7e4a32;"></div>
<div class="a" style="left:188.2px;top:282px;width:1.9px;height:1.1px;background:#7e4a32;"></div>
<svg class="a" style="left:415px;top:280px;" width="6" height="6" viewBox="0 0 6 6"><circle cx="2.2" cy="2.2" r="1.7" fill="none" stroke="#7a4a30" stroke-width="0.8"/><path d="M3.4 3.4 L5.5 5.5" stroke="#7a4a30" stroke-width="0.9"/></svg>
<div class="a" style="left:425px;top:282px;width:2px;height:1px;background:#7a4a30;"></div>
<div class="t" style="left:429.6px;top:279.74px;font-size:7.4px;color:#3a2a22;transform-origin:0 0;transform:scaleX(1.0513);">string</div>
<div class="a" style="left:5px;top:288.5px;width:630px;height:1px;background:#f0f0f0;"></div>
<div class="a" style="left:5px;top:299.4px;width:630px;height:1px;background:#f0f0f0;"></div>
<div class="a" style="left:5px;top:310.3px;width:630px;height:1px;background:#f0f0f0;"></div>
<div class="a" style="left:5px;top:321.2px;width:630px;height:1px;background:#f0f0f0;"></div>
<div class="a" style="left:5px;top:332px;width:630px;height:1px;background:#f0f0f0;"></div>
<div class="t" style="left:32.5px;top:291.24px;font-size:7.4px;color:#1e1e1e;transform-origin:0 0;transform:scaleX(1.1786);">custpricelist</div>
<div class="t" style="left:184.5px;top:291.24px;font-size:7.4px;color:#1e1e1e;transform-origin:0 0;transform:scaleX(0.9095);">{mamlaka_lab.BL.CLS_ORDERS}</div>
<div class="t" style="left:429.6px;top:291.24px;font-size:7.4px;color:#1e1e1e;transform-origin:0 0;transform:scaleX(0.9048);">mamlaka_lab.BL.CLS_ORDERS</div>
<div class="t" style="left:32.5px;top:302.24px;font-size:7.4px;color:#1e1e1e;transform-origin:0 0;transform:scaleX(0.9999);">this</div>
<div class="t" style="left:184.5px;top:302.24px;font-size:7.4px;color:#1e1e1e;transform-origin:0 0;transform:scaleX(0.9253);">{mamlaka_lab.PL.FRMCUSTPRICELIST, Text: Customers Tests Price List}</div>
<div class="t" style="left:429.6px;top:302.24px;font-size:7.4px;color:#1e1e1e;transform-origin:0 0;transform:scaleX(0.9055);">mamlaka_lab.PL.FRMCUSTPRICELIST</div>
<svg class="a" style="left:14px;top:302.5px;" width="5" height="7" viewBox="0 0 5 7"><path d="M0.5 0.5 L4.5 3.5 L0.5 6.5 Z" fill="none" stroke="#1e1e1e"/></svg>
<div class="t" style="left:32.5px;top:313.14px;font-size:7.4px;color:#1e1e1e;transform-origin:0 0;transform:scaleX(1.0144);">this.dgvcustpricelist</div>
<div class="t" style="left:184.5px;top:313.14px;font-size:7.4px;color:#1e1e1e;transform-origin:0 0;transform:scaleX(0.9764);">{System.Windows.Forms.DataGridView}</div>
<div class="t" style="left:429.6px;top:313.14px;font-size:7.4px;color:#1e1e1e;transform-origin:0 0;transform:scaleX(0.9860);">System.Windows.Forms.DataGridView</div>
<svg class="a" style="left:14px;top:313.4px;" width="5" height="7" viewBox="0 0 5 7"><path d="M0.5 0.5 L4.5 3.5 L0.5 6.5 Z" fill="none" stroke="#1e1e1e"/></svg>
<div class="t" style="left:32.5px;top:323.94px;font-size:7.4px;color:#1e1e1e;transform-origin:0 0;transform:scaleX(0.9937);">this.dgvcustpricelist.DataSource</div>
<div class="t" style="left:184.5px;top:323.94px;font-size:7.4px;color:#1e1e1e;transform-origin:0 0;transform:scaleX(1.0431);">null</div>
<div class="t" style="left:429.6px;top:323.94px;font-size:7.4px;color:#1e1e1e;transform-origin:0 0;transform:scaleX(1.0040);">object</div>
<svg class="a" style="left:22px;top:290px;" width="10" height="9" viewBox="0 0 10 9"><ellipse cx="4" cy="4" rx="3.6" ry="3" fill="#2e6fb8"/><rect x="6" y="5" width="3" height="3.5" fill="#3c3c3c"/></svg>
<svg class="a" style="left:22px;top:301.5px;" width="8" height="7" viewBox="0 0 8 7"><ellipse cx="4" cy="3.5" rx="3.6" ry="3" fill="#2e6fb8"/></svg>
<svg class="a" style="left:22px;top:312.5px;" width="8" height="7" viewBox="0 0 8 7"><ellipse cx="4" cy="3.5" rx="3.6" ry="3" fill="#2e6fb8"/></svg>
<svg class="a" style="left:22px;top:322.5px;" width="8" height="8" viewBox="0 0 8 8"><path d="M1 7 L4.5 3.5" stroke="#3c3c3c" stroke-width="1.6"/><circle cx="5.5" cy="2.5" r="2.2" fill="#3c3c3c"/><path d="M5.5 1.5 L7.5 -0.5" stroke="#ffffff" stroke-width="1.3"/></svg>
<div class="a" style="left:4px;top:392px;width:26px;height:13px;background:#ffffff;"></div>
<div class="t" style="left:8px;top:395.74px;font-size:7.4px;color:#1e1e1e;transform-origin:0 0;transform:scaleX(1.0054);">Autos</div>
<div class="a" style="left:30.7px;top:392.5px;width:59.5px;height:13.5px;background:#4d6082;"></div>
<div class="t" style="left:34.6px;top:396.24px;font-size:7.4px;color:#ffffff;transform-origin:0 0;transform:scaleX(0.9221);">Locals</div>
<div class="t" style="left:60.9px;top:396.24px;font-size:7.4px;color:#ffffff;transform-origin:0 0;transform:scaleX(0.9428);">Watch 1</div>
<div class="a" style="left:650px;top:251px;width:130px;height:141.5px;background:#ffffff;border:1px solid #42567a;border-bottom:0"></div>
<div class="a" style="left:650px;top:251px;width:130px;height:15px;background:#4d6082;border-top:1px solid #62769a"></div>
<div class="t" style="left:653.6px;top:255.24px;font-size:7.4px;color:#ffffff;transform-origin:0 0;transform:scaleX(0.9108);">Call Stack</div>
<svg class="a" style="left:747.2px;top:258px;" width="3.6" height="2.3" viewBox="0 0 3.6 2.3"><path d="M0 0 L3.6 0 L1.8 1.8 Z" fill="#ffffff"/></svg>
<svg class="a" style="left:758px;top:255px;" width="6" height="8" viewBox="0 0 6 8"><path d="M1.8 0.6 V4.6 M4.2 0.6 V4.6 M1.8 0.6 H4.2 M0.3 4.8 H5.7 M3 4.8 V8" fill="none" stroke="#e8ecf4" stroke-width="0.75"/></svg>
<svg class="a" style="left:769px;top:255px;" width="7" height="7" viewBox="0 0 7 7"><path d="M0.8 0.8 L6.2 6.2 M6.2 0.8 L0.8 6.2" stroke="#e8ecf4" stroke-width="0.85"/></svg>
<div class="a" style="left:750.5px;top:266px;width:1px;height:120px;background:#eeeeee;"></div>
<div class="t" style="left:663.9px;top:268.84px;font-size:7.4px;color:#1e1e1e;transform-origin:0 0;transform:scaleX(0.9790);">Name</div>
<div class="t" style="left:752px;top:268.84px;font-size:7.4px;color:#1e1e1e;transform-origin:0 0;transform:scaleX(0.9975);">Lang</div>
<div class="a" style="left:770px;top:266px;width:9px;height:126.5px;background:#ebebef;"></div>
<svg class="a" style="left:771.5px;top:269px;" width="6" height="4" viewBox="0 0 6 4"><path d="M0.5 3.5 L3 0.5 L5.5 3.5" fill="none" stroke="#c9c9c9"/></svg>
<svg class="a" style="left:771.5px;top:386px;" width="6" height="4" viewBox="0 0 6 4"><path d="M0.5 0.5 L3 3.5 L5.5 0.5" fill="none" stroke="#c9c9c9"/></svg>
<div class="a" style="left:661px;top:279px;width:99px;height:10px;overflow:hidden">
<div class="t" style="left:2.3px;top:1.74px;font-size:7.4px;color:#1e1e1e;transform-origin:0 0;transform:scaleX(0.9852);">mamlaka-lab.exe!mamlaka</div>
</div>
<div class="t" style="left:752px;top:280.74px;font-size:7.4px;color:#1e1e1e;transform-origin:0 0;transform:scaleX(0.9103);">C#</div>
<div class="a" style="left:651px;top:289.5px;width:119px;height:1px;background:#f0f0f0;"></div>
<div class="a" style="left:661px;top:289.5px;width:99px;height:10px;overflow:hidden">
<div class="t" style="left:2.3px;top:1.74px;font-size:7.4px;color:#1e1e1e;transform-origin:0 0;transform:scaleX(0.9852);">mamlaka-lab.exe!mamlaka</div>
</div>
<div class="t" style="left:752px;top:291.24px;font-size:7.4px;color:#1e1e1e;transform-origin:0 0;transform:scaleX(0.9103);">C#</div>
<div class="a" style="left:651px;top:300.0px;width:119px;height:1px;background:#f0f0f0;"></div>
<div class="a" style="left:661px;top:300.5px;width:99px;height:10px;overflow:hidden">
<div class="t" style="left:2.3px;top:1.74px;font-size:7.4px;color:#8a8a8a;transform-origin:0 0;transform:scaleX(0.9560);">[External Code]</div>
</div>
<div class="a" style="left:651px;top:311.0px;width:119px;height:1px;background:#f0f0f0;"></div>
<div class="a" style="left:661px;top:311.5px;width:99px;height:10px;overflow:hidden">
<div class="t" style="left:2.3px;top:1.74px;font-size:7.4px;color:#1e1e1e;transform-origin:0 0;transform:scaleX(0.9852);">mamlaka-lab.exe!mamlaka</div>
</div>
<div class="t" style="left:752px;top:313.24px;font-size:7.4px;color:#1e1e1e;transform-origin:0 0;transform:scaleX(0.9103);">C#</div>
<div class="a" style="left:651px;top:322.0px;width:119px;height:1px;background:#f0f0f0;"></div>
<div class="a" style="left:661px;top:322px;width:99px;height:10px;overflow:hidden">
<div class="t" style="left:2.3px;top:1.74px;font-size:7.4px;color:#8a8a8a;transform-origin:0 0;transform:scaleX(0.9560);">[External Code]</div>
</div>
<div class="a" style="left:651px;top:332.5px;width:119px;height:1px;background:#f0f0f0;"></div>
<div class="a" style="left:661px;top:333px;width:99px;height:10px;overflow:hidden">
<div class="t" style="left:2.3px;top:1.74px;font-size:7.4px;color:#1e1e1e;transform-origin:0 0;transform:scaleX(0.9852);">mamlaka-lab.exe!mamlaka</div>
</div>
<div class="t" style="left:752px;top:334.74px;font-size:7.4px;color:#1e1e1e;transform-origin:0 0;transform:scaleX(0.9103);">C#</div>
<div class="a" style="left:651px;top:343.5px;width:119px;height:1px;background:#f0f0f0;"></div>
<div class="a" style="left:661px;top:343.8px;width:99px;height:10px;overflow:hidden">
<div class="t" style="left:2.3px;top:1.74px;font-size:7.4px;color:#8a8a8a;transform-origin:0 0;transform:scaleX(0.9560);">[External Code]</div>
</div>
<div class="a" style="left:651px;top:354.3px;width:119px;height:1px;background:#f0f0f0;"></div>
<svg class="a" style="left:652.5px;top:282.5px;" width="8" height="7" viewBox="0 0 8 7"><path d="M0.5 2 H3.5 V0.5 L7.5 3.5 L3.5 6.5 V5 H0.5 Z" fill="#ffe24b" stroke="#8a7a20" stroke-width="0.7"/></svg>
<div class="a" style="left:650px;top:392px;width:130px;height:13.6px;background:#4d6082;"></div>
<div class="a" style="left:651px;top:392px;width:20.5px;height:13.6px;background:#ffffff;"></div>
<svg class="a" style="left:655px;top:394px;" width="12" height="9" viewBox="0 0 12 9"><path d="M0 1 H2 M0 4.5 H2 M0 8 H2 M3 1 H11 M3 4.5 H11 M3 8 H11" stroke="#3c3c3c" stroke-width="1.2"/></svg>
<svg class="a" style="left:677px;top:394px;" width="10" height="9" viewBox="0 0 10 9"><rect x="3.5" y="0.5" width="6" height="5" fill="none" stroke="#ffffff" stroke-width="0.9"/><ellipse cx="3.5" cy="6" rx="3.2" ry="2.6" fill="#ffffff"/></svg>
<svg class="a" style="left:699px;top:394px;" width="10" height="9" viewBox="0 0 10 9"><path d="M1 8 L5 4 M3 1 H8 V6" fill="none" stroke="#ffffff" stroke-width="0.9"/></svg>
<svg class="a" style="left:721px;top:394px;" width="10" height="9" viewBox="0 0 10 9"><rect x="0.5" y="1.5" width="9" height="6" fill="none" stroke="#ffffff" stroke-width="0.9"/><path d="M3 3.5 L5 4.5 L3 5.5" fill="none" stroke="#ffffff" stroke-width="0.7"/></svg>
<svg class="a" style="left:743px;top:394px;" width="10" height="9" viewBox="0 0 10 9"><rect x="0.5" y="1.5" width="9" height="6" fill="none" stroke="#ffffff" stroke-width="0.9"/><path d="M3 3.5 L5 4.5 L3 5.5" fill="none" stroke="#ffffff" stroke-width="0.7"/></svg>
<svg class="a" style="left:764px;top:394px;" width="10" height="9" viewBox="0 0 10 9"><path d="M6 0.5 H0.5 V8.5 H6" fill="none" stroke="#ffffff" stroke-width="0.9"/><path d="M3 4.5 H9.5 M7 2.5 L9.5 4.5 L7 6.5" fill="none" stroke="#ffffff" stroke-width="0.9"/></svg>
<div class="a" style="left:0px;top:410px;width:800px;height:15px;background:#ca5100;"></div>
<div class="t" style="left:3px;top:413.24px;font-size:7.4px;color:#ffffff;transform-origin:0 0;transform:scaleX(0.8894);">Ready</div>
<svg class="a" style="left:745px;top:413px;" width="7" height="9" viewBox="0 0 7 9"><path d="M3.5 0.5 L6.5 4 H4.5 V8 H2.5 V4 H0.5 Z" fill="#ffffff"/></svg>
<div class="t" style="left:757.5px;top:414.24px;font-size:7.4px;color:#ffffff;transform-origin:0 0;transform:scaleX(0.9695);">Publish</div>
<svg class="a" style="left:786px;top:415px;" width="4" height="3" viewBox="0 0 4 3"><path d="M0 2.5 L2 0.3 L4 2.5 Z" fill="#ffffff"/></svg>
<div class="a" style="left:119.5px;top:209px;width:1px;height:58px;background:#6e6e6e;"></div>
<div class="a" style="left:121px;top:279px;width:1px;height:32px;background:#6e6e6e;"></div>
<div class="a" style="left:121px;top:311px;width:1px;height:26px;background:#c8c8c8;"></div>
<div class="a" style="left:122.5px;top:337px;width:438px;height:88px;background:#dfe3ea;box-shadow:0 0 2px rgba(0,0,0,0.25)"></div>
<div class="a" style="left:122.5px;top:337px;width:438px;height:11px;background:#cdd3df;"></div>
<svg class="a" style="left:126px;top:338.5px;" width="9" height="8" viewBox="0 0 9 8"><path d="M4.5 0.5 L8.5 7.5 H0.5 Z" fill="#f4c400" stroke="#b08a00" stroke-width="0.6"/><path d="M4.5 2.8 V5.2 M4.5 6 V6.8" stroke="#1e1e1e" stroke-width="0.9"/></svg>
<div class="t" style="left:139.7px;top:340.24px;font-size:7.4px;color:#1e1e1e;font-weight:bold;transform-origin:0 0;transform:scaleX(0.9974);">FormatException was unhandled</div>
<svg class="a" style="left:551.5px;top:339.5px;" width="7" height="7" viewBox="0 0 7 7"><path d="M0.5 0.5 L6.5 6.5 M6.5 0.5 L0.5 6.5" stroke="#1e1e1e" stroke-width="1.2"/></svg>
<div class="t" style="left:129.25px;top:353.24px;font-size:7.4px;color:#1e1e1e;transform-origin:0 0;transform:scaleX(1.0063);">An unhandled exception of type &#x27;System.FormatException&#x27; occurred in mscorlib.dll</div>
<div class="t" style="left:129.25px;top:373.74px;font-size:7.4px;color:#1e1e1e;transform-origin:0 0;transform:scaleX(1.0289);">Additional information: Input string was not in a correct format.</div>
<div class="a" style="left:122.5px;top:385px;width:438px;height:1px;background:#c9ced8;"></div>
<div class="a" style="left:122.5px;top:386px;width:438px;height:39px;background:linear-gradient(90deg,#ffffff,#e6e9ef)"></div>
<div class="t" style="left:129.25px;top:389.24px;font-size:7.4px;color:#1e1e1e;font-weight:bold;transform-origin:0 0;transform:scaleX(0.9928);">Troubleshooting tips:</div>
<div class="a" style="left:126.5px;top:397.5px;width:431px;height:30px;background:#ffffff;border:1px solid #a0a0a0;"></div>
<div class="t" style="left:129.5px;top:400.74px;font-size:7.4px;color:#1c6ec8;transform-origin:0 0;transform:scaleX(1.0127);">When converting a string to DateTime, parse the string to take the date before putting each variable into the DateTime object.</div>
<div class="t" style="left:129.8px;top:412.34px;font-size:7.4px;color:#1c6ec8;transform-origin:0 0;transform:scaleX(1.0203);">Make sure your method arguments are in the right format.</div>
<div class="a" style="left:548px;top:398.5px;width:9px;height:28px;background:#f0f0f0;"></div>
<svg class="a" style="left:549.5px;top:401px;" width="6" height="4" viewBox="0 0 6 4"><path d="M0.5 3.5 L3 0.5 L5.5 3.5" fill="none" stroke="#3c3c3c"/></svg>
<div class="a" style="left:549px;top:407px;width:7px;height:18px;background:#c2c3c9;"></div>
<div class="a" style="left:0px;top:425px;width:800px;height:25px;background:#141618;"></div>
<div class="a" style="left:122.5px;top:425px;width:438px;height:25px;background:#2a2b2d;"></div>
<div class="t" style="left:130px;top:424.54px;font-size:7.4px;color:#6a6a6a;transform-origin:0 0;transform:scaleX(1.0295);">Get general help for this exception.</div>
<div class="t" style="left:130px;top:438.24px;font-size:7.4px;color:#6a6a6a;transform-origin:0 0;transform:scaleX(1.0018);">Search for more Help Online...</div>
<div class="a" style="left:122.5px;top:432px;width:438px;height:0.6px;background:#1e1e1e;"></div>
<svg class="a" style="left:10px;top:432px;" width="11" height="11" viewBox="0 0 11 11"><path d="M0 1.5 L4.6 0.9 V5.1 H0 Z M5.4 0.8 L11 0 V5.1 H5.4 Z M0 5.9 H4.6 V10.1 L0 9.5 Z M5.4 5.9 H11 V11 L5.4 10.2 Z" fill="#ffffff"/></svg>
<svg class="a" style="left:40px;top:432px;" width="11" height="11" viewBox="0 0 11 11"><circle cx="6.5" cy="4.5" r="3.3" fill="none" stroke="#ffffff" stroke-width="1"/><path d="M4.2 6.8 L0.8 10.2" stroke="#ffffff" stroke-width="1.2"/></svg>
<svg class="a" style="left:70px;top:432px;" width="11" height="11" viewBox="0 0 11 11"><rect x="1" y="1" width="9" height="9" fill="none" stroke="#ffffff" stroke-width="1.3"/></svg>
<svg class="a" style="left:100px;top:431px;" width="13" height="13" viewBox="0 0 13 13"><path d="M12 7 H3.5 Q3.8 10.5 7.5 10.5 Q10 10.5 11.5 9.5 V12 Q9.5 13 7 13 Q0.5 12.5 0.8 6.5 Q1.5 0.5 7 0.5 Q12.5 0.8 12 7 Z M3.6 5 H9.3 Q9 2.6 6.5 2.6 Q4 2.8 3.6 5 Z" fill="#1e90ff" fill-rule="evenodd"/></svg>
<svg class="a" style="left:132px;top:432px;" width="13" height="11" viewBox="0 0 13 11"><path d="M0.5 1.5 H5 L6 2.5 H12.5 V10.5 H0.5 Z" fill="#f0c85a"/><rect x="2" y="5" width="9" height="4" fill="#4aa3df"/></svg>
<svg class="a" style="left:162px;top:430px;" width="14" height="15" viewBox="0 0 14 15"><path d="M0.8 4.5 H13.2 V14.2 H0.8 Z" fill="#ffffff"/><path d="M4.5 4.5 V2 Q7 -0.5 9.5 2 V4.5" fill="none" stroke="#ffffff" stroke-width="1.1"/><path d="M4.2 7 H6.6 V9.2 H4.2 Z M7.4 7 H9.8 V9.2 H7.4 Z M4.2 10 H6.6 V12.2 H4.2 Z M7.4 10 H9.8 V12.2 H7.4 Z" fill="#2a2b2d"/></svg>
<svg class="a" style="left:195px;top:431px;" width="14" height="13" viewBox="0 0 14 13"><path d="M3.5 0.8 L13 2.2 V9.5 L3.5 8.2 Z" fill="#3aa0e0"/><path d="M0.5 9.5 L11 10.2 L9.5 12.2 L0.5 11.5 Z" fill="#d8e4f0"/></svg>
<svg class="a" style="left:224px;top:432px;" width="17" height="10" viewBox="0 0 17 10"><path d="M3.5 0.5 H16 L13.5 9.5 H0.5 Z" fill="#9cc4ea"/><path d="M4.5 2 H14 L12.3 8 H2.7 Z" fill="#4f86c0"/><path d="M5 4 H12" stroke="#cfe2f5" stroke-width="0.8"/></svg>
<svg class="a" style="left:255px;top:431px;" width="23" height="15" viewBox="0 0 23 15"><path d="M0.8 4.5 L8 0.8 L15.2 4.5 V12 H0.8 Z" fill="#ffffff"/><path d="M0.8 4.5 L8 9 L15.2 4.5" fill="none" stroke="#2a2b2d" stroke-width="0.8"/><circle cx="15.5" cy="10.5" r="3.8" fill="#1e1e1e" stroke="#d0d0d0" stroke-width="0.7"/><path d="M15.5 8.5 V12.5 M14 10.5 H16" stroke="#ffffff" stroke-width="0.8"/></svg>
<svg class="a" style="left:286px;top:429px;" width="17" height="16" viewBox="0 0 17 16"><path d="M1 3 Q5 1 9 3 V12 Q5 14 1 12 Z" fill="#e8b84a"/><ellipse cx="5" cy="3" rx="4" ry="1.5" fill="#f5d58a"/><path d="M11 3 H15 V7 M1 14.5 H5" stroke="#4aa350" stroke-width="1.4" fill="none"/><path d="M9.5 10 L14.5 14 M14.5 10 L9.5 14" stroke="#c0c0c0" stroke-width="0.9"/></svg>
<div class="a" style="left:311px;top:425px;width:30px;height:25px;background:#3b3b3d;"></div>
<svg class="a" style="left:318px;top:430px;" width="16" height="16" viewBox="0 0 16 16"><rect x="0.5" y="0.5" width="15" height="15" fill="#68217a"/><path d="M10.5 2.5 L13.5 3.8 V12.2 L10.5 13.5 L5.5 9.2 L3.5 10.8 L2.5 10.3 V5.7 L3.5 5.2 L5.5 6.8 Z M10.5 5.3 L7.5 8 L10.5 10.7 Z M3.8 7 V9 L4.9 8 Z" fill="#ffffff" fill-rule="evenodd"/></svg>
<svg class="a" style="left:349px;top:430px;" width="16" height="15" viewBox="0 0 16 15"><rect x="1" y="4" width="5" height="7" fill="#d03a2a"/><rect x="6" y="1" width="8" height="7" fill="#f0b428"/><rect x="6" y="8" width="8" height="5" fill="#3a8ad8"/><rect x="1" y="11" width="5" height="2" fill="#ffffff"/></svg>
<div class="a" style="left:282px;top:448.5px;width:25.5px;height:1.5px;background:#76c8e8;"></div>
<div class="a" style="left:311px;top:448.5px;width:30px;height:1.5px;background:#76c8e8;"></div>
<div class="a" style="left:344.7px;top:448.5px;width:25px;height:1.5px;background:#76c8e8;"></div>
<div class="t" style="left:555.5px;top:434.24px;font-size:7.4px;color:#ffffff;">Desktop</div>
<svg class="a" style="left:588px;top:427px;" width="6" height="5" viewBox="0 0 6 5"><path d="M0.5 0.5 L2.5 2.5 L0.5 4.5 M3 0.5 L5 2.5 L3 4.5" fill="none" stroke="#ffffff" stroke-width="0.8"/></svg>
<svg class="a" style="left:601px;top:434px;" width="8" height="5" viewBox="0 0 8 5"><path d="M0.5 4.5 L4 1 L7.5 4.5" fill="none" stroke="#ffffff" stroke-width="0.9"/></svg>
<svg class="a" style="left:620px;top:433px;" width="11" height="7" viewBox="0 0 11 7"><rect x="0.5" y="0.5" width="9" height="5.5" fill="none" stroke="#ffffff" stroke-width="0.9"/><rect x="1.5" y="1.5" width="6" height="3.5" fill="#ffffff"/><rect x="10" y="2" width="1" height="2.5" fill="#ffffff"/></svg>
<svg class="a" style="left:642px;top:431px;" width="10" height="10" viewBox="0 0 10 10"><path d="M1 9 A8 8 0 0 1 9 1 M3.5 9 A5.5 5.5 0 0 1 9 3.5 M6 9 A3 3 0 0 1 9 6" fill="none" stroke="#ffffff" stroke-width="0.9"/></svg>
<svg class="a" style="left:662px;top:431px;" width="11" height="10" viewBox="0 0 11 10"><path d="M0.5 3.5 H2.5 L5 1 V9 L2.5 6.5 H0.5 Z" fill="#ffffff"/><path d="M7 3 Q8 5 7 7 M8.5 1.5 Q10.5 5 8.5 8.5" fill="none" stroke="#ffffff" stroke-width="0.8"/></svg>
<svg class="a" style="left:680px;top:431px;" width="16" height="10" viewBox="0 0 16 10"><rect x="0.5" y="0.5" width="15" height="9" fill="none" stroke="#ffffff" stroke-width="0.9"/><path d="M3 6.5 H13 M3 3 H13" stroke="#ffffff" stroke-width="0.7" stroke-dasharray="1 1"/></svg>
<div class="t" style="left:705px;top:434.24px;font-size:7.4px;color:#ffffff;">ENG</div>
<div class="t" style="left:729.5px;top:428.74px;font-size:7.4px;color:#ffffff;">10:16 AM</div>
<div class="t" style="left:730.5px;top:439.74px;font-size:7.4px;color:#ffffff;">9/6/2017</div>
<svg class="a" style="left:774px;top:432px;" width="13" height="12" viewBox="0 0 13 12"><path d="M0.5 0.5 H11.5 V8 H4 L1.5 10 V8 H0.5 Z" fill="#ffffff"/><circle cx="9.5" cy="9" r="2.8" fill="#3c3c3c" stroke="#ffffff" stroke-width="0.6"/></svg>
<div class="t" style="left:162.3px;top:221.78px;font-size:15.5px;color:#111111;transform-origin:0 0;transform:scaleX(1.0490);">The value of the variable is an Empty String</div>
<svg class="a" style="left:180px;top:236px;" width="110" height="56" viewBox="0 0 110 56"><path d="M98.8 6 L21 42.5" stroke="#d0203a" stroke-width="2.3" stroke-linecap="round"/><path d="M15 46.5 L22.2 39 L25.9 46 Z" fill="#d0203a"/></svg>
</body></html>
